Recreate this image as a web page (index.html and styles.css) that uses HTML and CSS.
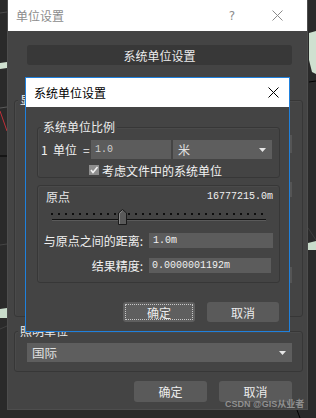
FILE: index.html
```html
<!DOCTYPE html>
<html lang="zh-CN">
<head>
<meta charset="utf-8">
<title>单位设置</title>
<link rel="stylesheet" href="styles.css">
</head>
<body>
<svg class="backdrop" width="316" height="418" viewBox="0 0 316 418">
  <line x1="0" y1="13" x2="7" y2="12" stroke="#4a4a4a"/>
  <polygon points="0,63 7,62 7,68 0,69" fill="#cfe0d0"/>
  <line x1="0" y1="108" x2="7" y2="107" stroke="#5a5a5a"/>
  <line x1="0" y1="111" x2="7" y2="131" stroke="#c0303a"/>
  <line x1="0" y1="156" x2="7" y2="156" stroke="#000"/>
  <line x1="0" y1="245" x2="7" y2="244" stroke="#444"/>
  <polygon points="0,309 7,308 7,318 0,318" fill="#c9dccb"/>
  <line x1="0" y1="329" x2="7" y2="326" stroke="#3f3f3f"/>
  <polygon points="309,33 316,31 316,74 312,72 309,60" fill="#cfe0d0"/>
  <line x1="309" y1="82" x2="316" y2="81" stroke="#000"/>
  <line x1="308" y1="228" x2="316" y2="240" stroke="#3c3c3c"/>
  <polygon points="308,243 316,241 316,250 308,250" fill="#c9dccb"/>
  <line x1="297" y1="410" x2="300" y2="418" stroke="#000"/>
</svg>

<div class="win">
  <div class="titlebar">
    <span class="title">单位设置</span>
    <span class="tb-btn help">?</span>
    <span class="tb-btn close">
      <svg width="11" height="11" viewBox="0 0 11 11"><path d="M0.5 0.5 L10.5 10.5 M10.5 0.5 L0.5 10.5" stroke="#8a8a8a" stroke-width="1" fill="none"/></svg>
    </span>
  </div>
  <div class="win-body">
    <div class="header-btn">系统单位设置</div>

    <div class="group g-display">
      <span class="group-label">显示单位比例</span>
      <div class="hidden-widget w1"></div>
      <div class="hidden-widget w2"></div>
      <div class="hidden-widget w3"></div>
    </div>

    <div class="group g-light">
      <span class="group-label">照明单位</span>
      <div class="combo wide">
        <span>国际</span>
        <svg class="arrow" width="7" height="4" viewBox="0 0 7 4"><polygon points="0,0 7,0 3.5,4" fill="#e6e6e6"/></svg>
      </div>
    </div>

    <div class="btn-row outer-btns">
      <div class="btn">确定</div>
      <div class="btn">取消</div>
    </div>
  </div>

  <div class="dialog">
    <div class="dlg-title">
      <span>系统单位设置</span>
      <svg class="dlg-close" width="11" height="11" viewBox="0 0 11 11"><path d="M0.5 0.5 L10.5 10.5 M10.5 0.5 L0.5 10.5" stroke="#000" stroke-width="1" fill="none"/></svg>
    </div>
    <div class="dlg-body">
      <div class="group g-scale">
        <span class="group-label">系统单位比例</span>
        <div class="scale-row">
          <span class="unit-label"><span class="one">1</span><span>单位</span><span class="eq">=</span></span>
          <div class="field f-scale">1.0</div>
          <div class="combo unit">
            <span>米</span>
            <svg class="arrow" width="7" height="4" viewBox="0 0 7 4"><polygon points="0,0 7,0 3.5,4" fill="#e6e6e6"/></svg>
          </div>
        </div>
        <div class="check-row">
          <svg class="checkbox" width="10" height="10" viewBox="0 0 10 10">
            <rect x="0" y="0" width="10" height="10" fill="#8e8e8e"/>
            <path d="M2 5 L4 7.5 L8.5 2" stroke="#f2f2f2" stroke-width="1.6" fill="none"/>
          </svg>
          <span>考虑文件中的系统单位</span>
        </div>
      </div>

      <div class="group g-origin">
        <div class="origin-head">
          <span>原点</span>
          <span class="mono">16777215.0m</span>
        </div>
        <div class="slider">
          <div class="track"></div>
          <svg class="thumb" width="9" height="16" viewBox="0 0 9 16">
            <polygon points="0.5,4 4.5,0.5 8.5,4 8.5,15.5 0.5,15.5" fill="#5a5a5a" stroke="#1a1a1a"/>
            <polyline points="1.5,15 1.5,4.5 4.5,1.8" fill="none" stroke="#8a8a8a"/>
          </svg>
        </div>
        <div class="info-row">
          <span class="info-label">与原点之间的距离:</span>
          <div class="field mono f-dist">1.0m</div>
        </div>
        <div class="info-row">
          <span class="info-label">结果精度:</span>
          <div class="field mono f-prec">0.0000001192m</div>
        </div>
      </div>

      <div class="btn-row dlg-btns">
        <div class="btn focused">确定</div>
        <div class="btn">取消</div>
      </div>
    </div>
  </div>
</div>

<div class="watermark">CSDN @GIS从业者</div>
</body>
</html>
```

FILE: styles.css
```css
* { box-sizing: border-box; }

html, body {
  margin: 0;
  padding: 0;
}

body {
  width: 316px;
  height: 418px;
  overflow: hidden;
  background: #2a2a2a;
  font-family: "Noto Sans CJK SC", "Noto Sans", sans-serif;
  font-size: 12px;
  color: #e8e8e8;
  position: relative;
}

.backdrop {
  position: absolute;
  left: 0;
  top: 0;
}

.win {
  position: relative;
  margin-left: 7px;
  width: 301px;
  height: 410px;
  background: #444444;
  border: 1px solid #4d4d4d;
  border-top: 0;
}

.titlebar {
  height: 31px;
  background: #ffffff;
  display: flex;
  align-items: center;
  padding-left: 8px;
  padding-right: 15px;
}

.title {
  color: #8c8c8c;
  font-size: 12px;
  margin-right: auto;
}

.tb-btn {
  width: 30px;
  display: flex;
  justify-content: center;
  align-items: center;
}

.help {
  color: #8c8c8c;
  font-family: "DejaVu Sans", sans-serif;
  font-size: 12px;
  margin-right: 15px;
}

.win-body {
  padding: 14px 0 0 6px;
}

.header-btn {
  margin-left: 13px;
  width: 265px;
  height: 20px;
  background: #383838;
  border-radius: 3px;
  display: flex;
  align-items: center;
  justify-content: center;
  color: #ececec;
  font-size: 12px;
}

.group {
  position: relative;
  border: 1px solid #373737;
  border-radius: 3px;
  box-shadow: inset 1px 1px 0 #4a4a4a;
}

.group-label {
  position: absolute;
  top: -8px;
  left: 3px;
  padding: 0 2px;
  background: #444444;
  line-height: 14px;
  color: #ececec;
}

.g-display {
  margin-top: 35px;
  width: 289px;
  height: 217px;
  padding: 34px 0 0 12px;
}

.hidden-widget {
  width: 265px;
  background: #555555;
}
.w1 { height: 18px; }
.w2 { height: 15px; margin-top: 29px; }
.w3 { height: 16px; margin-top: 70px; }

.g-light {
  margin-top: 14px;
  width: 289px;
  height: 41px;
  padding: 11px 0 0 12px;
}

.combo {
  height: 19px;
  background: #5e5e5e;
  display: flex;
  align-items: center;
  padding-left: 5px;
  padding-right: 6px;
  color: #e0e0e0;
}

.combo span { margin-right: auto; }

.combo.wide {
  width: 265px;
  font-size: 12.5px;
}

.btn-row {
  display: flex;
  justify-content: flex-end;
  gap: 12px;
}

.outer-btns {
  margin-top: 9px;
  padding-right: 15px;
}

.outer-btns .btn {
  height: 21px;
  width: 73px;
}

.btn {
  background: #5a5a5a;
  border-radius: 3px;
  display: flex;
  align-items: center;
  justify-content: center;
  color: #ececec;
  font-size: 12px;
}

/* inner dialog overlay */
.dialog {
  position: absolute;
  left: 17px;
  top: 77px;
  width: 265px;
  height: 255px;
  border: 1px solid #1f80dc;
  background: #444444;
}

.dlg-title {
  height: 29px;
  background: #ffffff;
  display: flex;
  align-items: center;
  padding-left: 8px;
  padding-right: 10px;
  color: #000;
  font-size: 12px;
}

.dlg-title span { margin-right: auto; }

.dlg-body {
  padding: 20px 9px 0 11px;
}

.g-scale {
  height: 51px;
  padding: 12px 0 0 3px;
}

.scale-row {
  display: flex;
  align-items: center;
  height: 19px;
}

.unit-label {
  width: 50px;
  display: flex;
  align-items: center;
  color: #f0f0f0;
}

.one {
  width: 12px;
  font-size: 12px;
}

.eq {
  margin-left: 6px;
}

.field {
  height: 19px;
  background: #5c5c5c;
  display: flex;
  align-items: center;
  padding-left: 4px;
  color: #cfcfcf;
  font-family: "Liberation Mono", "DejaVu Sans Mono", monospace;
  font-size: 10px;
}

.f-scale { width: 80px; }

.combo.unit {
  margin-left: 2px;
  width: 99px;
}

.check-row {
  display: flex;
  align-items: center;
  margin-top: 4px;
  margin-left: 48px;
  height: 14px;
  color: #f2f2f2;
}

.checkbox { margin-right: 3px; }

.g-origin {
  margin-top: 7px;
  height: 98px;
  padding: 2px 6px 0 8px;
}

.origin-head {
  display: flex;
  justify-content: space-between;
  align-items: center;
  height: 16px;
}

.mono {
  font-family: "Liberation Mono", "DejaVu Sans Mono", monospace;
  font-size: 10px;
  color: #f0f0f0;
}

.slider {
  position: relative;
  margin-top: 5px;
  margin-left: 5px;
  width: 217px;
  height: 16px;
  background-image: linear-gradient(to right, #0e0e0e 2px, transparent 2px);
  background-size: 7px 2px;
  background-repeat: repeat-x;
  background-position: 0 4px;
}

.track {
  position: absolute;
  left: 1px;
  top: 10px;
  width: 214px;
  height: 2px;
  background: #111;
  border-bottom: 1px solid #5a5a5a;
}

.thumb {
  position: absolute;
  left: 67px;
  top: 0;
}

.info-row {
  display: flex;
  align-items: center;
  margin-top: 7px;
  margin-left: -6px;
}

.info-row + .info-row { margin-top: 8px; }

.info-label {
  width: 103px;
  text-align: right;
  color: #f0f0f0;
  margin-right: 6px;
}

.f-dist {
  height: 15px;
  width: 124px;
}

.f-prec {
  height: 15px;
  width: 122px;
  padding-left: 3px;
}

.dlg-btns {
  margin-top: 19px;
  padding-right: 1px;
}

.dlg-btns .btn {
  height: 20px;
  width: 72px;
}

.btn.focused {
  background: #5f5f5f;
  outline: 1px dotted #c8c8c8;
  outline-offset: -3px;
}

.watermark {
  position: absolute;
  left: 225px;
  top: 397px;
  font-family: "Liberation Sans", "Noto Sans CJK SC", sans-serif;
  font-size: 9px;
  font-weight: bold;
  color: rgba(170, 170, 170, 0.75);
  white-space: nowrap;
}
```
